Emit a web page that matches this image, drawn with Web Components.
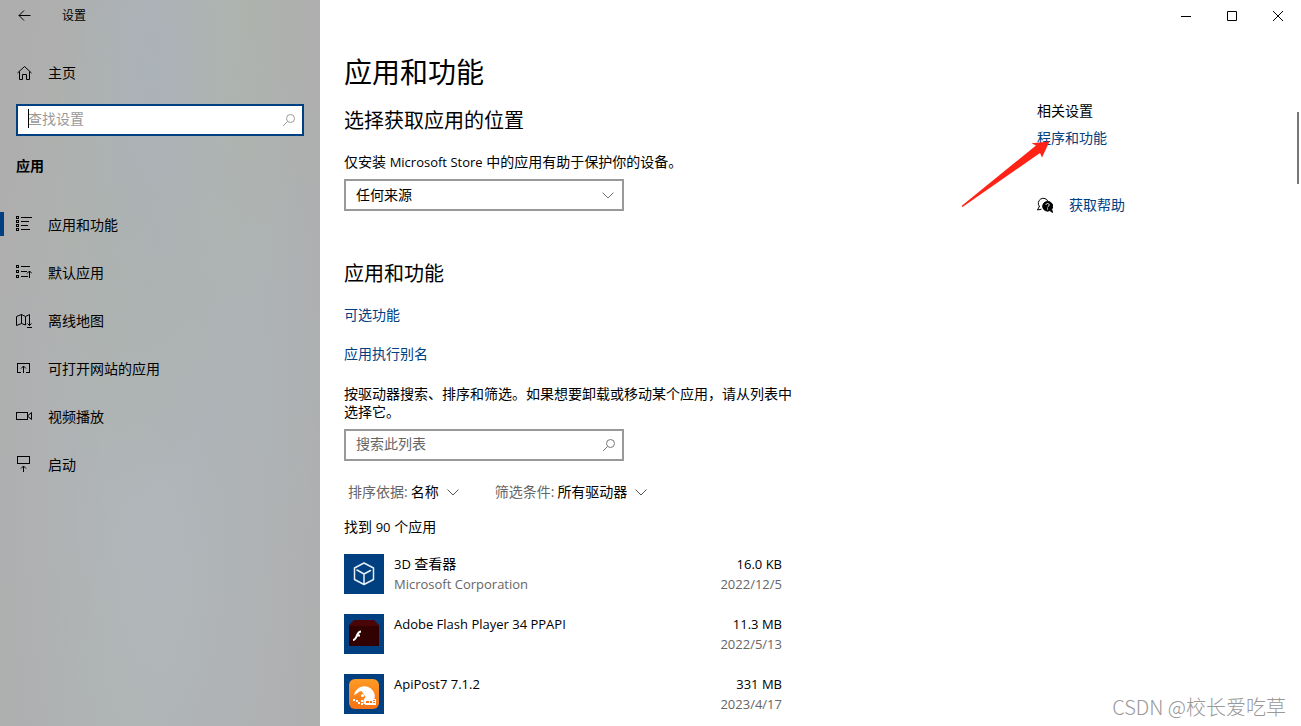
<!DOCTYPE html>
<html lang="zh-CN">
<head>
<meta charset="utf-8">
<title>设置</title>
<style>
  html { --accent: #004080; }
  body { margin: 0; background: #fff; color: #000; font: 14px/18px "Open Sans", "Noto Sans CJK SC", sans-serif; }
</style>
</head>
<body>
<settings-window></settings-window>

<script>
const ICONS = {
  back: [16, 16, '<path d="M14.500 7.500H3M8 2.500L3 7.500l5 5"/>'],
  home: [16, 16, '<path d="M1.500 8L8.500 1.500 15.500 8M3.500 6.500v8h3v-5h4v5h3v-8"/>'],
  search: [14, 14, '<circle cx="8.500" cy="5.500" r="4"/><path d="M5.500 8.500L1 13"/>'],
  chevron: [12, 8, '<path d="M.5 1.500L6 7l5.500-5.500"/>'],
  apps: [16, 16, '<g shape-rendering="crispEdges"><path d="M.5.5h2v2h-2zM.5 4.500h2v2h-2zM.5 8.500h2v2h-2zM.5 12.500h2v2h-2zM5 1.500h11M5 5.500h8M5 9.500h7M5 13.500h9"/></g>'],
  defaults: [16, 16, '<g shape-rendering="crispEdges"><path d="M.5 1.500h2v2h-2zM.5 6.500h2v2h-2zM.5 11.500h2v2h-2zM5 2.500h9M5 7.500h6M5 12.500h7M13.500 7v7"/></g><path d="M11 9.500L13.500 7l2.500 2.500"/>'],
  map: [16, 16, '<path d="M10 12.500l-.5.500-4-1.500-5 2v-9l5-2 4 2 4-2V8M5.500 2.500v9M9.500 4.500V13M13.500 8v6M11.500 11.500l2 2 2-2M11 15.500h5"/>'],
  site: [16, 16, '<path shape-rendering="crispEdges" d="M5 12.500H1.500v-9h12v9H10M7.500 6v7"/><path d="M5 8.500L7.500 6 10 8.500"/>'],
  video: [16, 16, '<path shape-rendering="crispEdges" d="M.5 4.500h11v7H.5z"/><path d="M12 7.500l3.500-3v7L12 8.500"/>'],
  startup: [16, 18, '<path shape-rendering="crispEdges" d="M1.500 1.500h12v7h-12zM7.500 11v6"/><path d="M5 13.500L7.500 11l2.500 2.500"/>'],
  minimize: [10, 10, '<path d="M0 5.500h10"/>'],
  maximize: [10, 10, '<path d="M.5.5h9v9h-9z"/>'],
  close: [10, 10, '<path d="M0 0l10 10M10 0L0 10"/>'],
  help: [16, 16, '<path d="M2.500 9.500A5 5 0 1 1 11 4.500M2.500 9l-2 4 4-.8"/><path fill="currentColor" d="M10.500 4.500a4.800 4.800 0 1 0 2.300 9l2.700 2-.8-3.200a4.800 4.800 0 0 0-4.200-7.800z"/><path stroke="#fff" d="M9 8c0-2 3.200-2 3.200 0 0 1.200-1.600 1.200-1.600 2.400m0 1v1.200"/>'],
  cube: [40, 40, '<path fill="#004080" stroke="none" d="M0 0h40v40H0z"/><g stroke="#e8eef6" stroke-width="1.500" stroke-linejoin="round" stroke-linecap="round"><path d="M20 9l9.500 5v11.500L20 30.500l-9.500-5V14zM20 30.500V20l-7-4M20 20l6.500-3.500"/></g>'],
  flash: [40, 40, '<g stroke="none"><path fill="#004080" d="M0 0h40v40H0z"/><path fill="#4a0606" d="M10 6h20l5 5v4H5v-4z"/><path fill="#320202" d="M5 12h30v20H5z"/></g><path stroke="#fff" stroke-width="2" d="M17 17.500c-3 0-3.500 3-4.500 5s-1.500 3.500-3.500 3.500M12 21.500h4"/>'],
  apipost: [40, 40, '<defs><linearGradient id="g" x2="0" y2="1"><stop stop-color="#ff9a24"/><stop offset="1" stop-color="#f47216"/></linearGradient></defs><g stroke="none"><path fill="#004080" d="M0 0h40v40H0z"/><rect x="5" y="5" width="30" height="30" rx="6" fill="url(#g)"/><path fill="#fff" d="M10 21A10.500 10.500 0 0 1 30.500 20c1 4-1 8-4 10h-7v-4l2-3-4-6c-3 0-4 3-7.500 4z"/><circle cx="18.500" cy="21.500" r="1.500" fill="#fff"/><path fill="#fff" d="M21 25h11v6H21zM9 25h2v2H9zM12 26h2v2h-2zM14 28h2v2h-2zM17 26h2v2h-2zM17 29h2v2h-2z"/><path fill="#f47216" d="M22 27h3v2h-3zM26 27h2v2h-2zM29 26h2v1h-2zM29 28h2v1h-2z"/></g>']
};

function define(name, render) {
  customElements.define(name, class extends HTMLElement {
    connectedCallback() {
      if (!this.shadowRoot) this.attachShadow({ mode: 'open' }).innerHTML = render(this);
    }
  });
}

define('ui-icon', el => {
  const [w, h, body] = ICONS[el.getAttribute('name')];
  return `<style>:host{display:block;flex:none;line-height:0}svg{display:block}</style>
  <svg width="${w}" height="${h}" viewBox="0 0 ${w} ${h}" fill="none" stroke="currentColor" aria-hidden="true">${body}</svg>`;
});

define('nav-item', el => `<style>
  :host{display:block}
  a{display:flex;align-items:center;gap:16px;height:48px;padding:0 16px;box-sizing:border-box;color:inherit;text-decoration:none;position:relative}
  a[aria-current]::before{content:"";position:absolute;left:0;top:11px;width:4px;height:24px;background:var(--accent)}
  ui-icon{margin-bottom:2px}
  </style>
  <a href="#" ${el.hasAttribute('current') ? 'aria-current="page"' : ''}><ui-icon name="${el.getAttribute('icon')}"></ui-icon><slot></slot></a>`);

define('search-box', el => `<style>
  :host{display:block}
  .box{display:flex;align-items:center;position:relative;height:32px;box-sizing:border-box;border:2px solid var(--edge,#999);background:#fff;padding:0 6px 0 10px}
  input{flex:1;min-width:0;height:28px;padding:0 0 4px;box-sizing:border-box;border:0;outline:0;background:none;font:inherit;color:#000}
  input::placeholder{color:var(--hint,#666);opacity:1}
  ui-icon{color:var(--glass,#777)}
  .caret{position:absolute;left:10px;top:3px;width:1px;height:19px;background:#000}
  </style>
  <div class="box"><input type="text" aria-label="${el.getAttribute('hint')}" placeholder="${el.getAttribute('hint')}">
  <ui-icon name="search"></ui-icon>${el.hasAttribute('active') ? '<span class="caret"></span>' : ''}</div>`);

define('settings-sidebar', () => `<style>
  :host{display:block;background:
    radial-gradient(ellipse at 150px 70px,#abb2b8 0,#abb2b800 90px),
    radial-gradient(ellipse at 220px 20px,#aeb4ae 0,#aeb4ae00 110px),
    radial-gradient(ellipse at 130px 190px,#adb2ab 0,#adb2ab00 110px),
    radial-gradient(ellipse at 210px 310px,#adb3b6 0,#adb3b600 150px),
    radial-gradient(ellipse at 160px 520px,#b1b7bb 0,#b1b7bb00 180px),
    radial-gradient(ellipse at 120px 720px,#adb1ab 0,#adb1ab00 90px),#aeaeae}
  header{display:flex;align-items:center;gap:30px;height:32px;padding:0 16px;font-size:12px}
  button{border:0;background:none;padding:0;color:inherit}
  .home{display:flex;align-items:center;gap:16px;height:48px;margin-top:17px;padding:0 16px;color:inherit;text-decoration:none}
  search-box{margin:7px 16px 0;--edge:var(--accent);--hint:#999;--glass:#999}
  h2{margin:21px 16px 0;font-size:14px;line-height:18px;font-weight:700}
  nav{margin-top:26px}
  </style>
  <header><button aria-label="返回"><ui-icon name="back"></ui-icon></button><span>设置</span></header>
  <a class="home" href="#"><ui-icon name="home"></ui-icon>主页</a>
  <search-box hint="查找设置" active></search-box>
  <h2>应用</h2>
  <nav>
    <nav-item icon="apps" current>应用和功能</nav-item>
    <nav-item icon="defaults">默认应用</nav-item>
    <nav-item icon="map">离线地图</nav-item>
    <nav-item icon="site">可打开网站的应用</nav-item>
    <nav-item icon="video">视频播放</nav-item>
    <nav-item icon="startup">启动</nav-item>
  </nav>`);

define('window-controls', () => `<style>
  :host{display:flex;justify-content:flex-end;height:32px}
  button{display:grid;place-items:center;width:46px;padding:0;border:0;background:none;color:#000}
  </style>
  <button aria-label="最小化"><ui-icon name="minimize"></ui-icon></button>
  <button aria-label="最大化"><ui-icon name="maximize"></ui-icon></button>
  <button aria-label="关闭"><ui-icon name="close"></ui-icon></button>`);

define('drop-down', el => `<style>
  :host{display:block}
  .field{display:flex;align-items:center;position:relative}
  select{appearance:none;border:0;background:none;outline:0;margin:0;padding:0 22px 0 0;font:inherit;color:#000}
  ui-icon{position:absolute;right:2px;pointer-events:none;color:#555}
  label{color:#666;margin-right:3px}
  .boxed select{width:100%;height:32px;border:2px solid #999;padding:0 30px 0 10px}
  .boxed ui-icon{right:10px;color:#777}
  </style>
  <div class="field ${el.hasAttribute('boxed') ? 'boxed' : ''}">
  ${el.hasAttribute('label') ? `<label for="s">${el.getAttribute('label')}</label>` : ''}
  <select id="s" ${el.hasAttribute('label') ? '' : 'aria-label="应用来源"'}><option>${el.getAttribute('value')}</option></select>
  <ui-icon name="chevron"></ui-icon></div>`);

define('app-row', el => `<style>
  :host{display:grid;grid-template-columns:40px 1fr auto;column-gap:10px;height:40px;line-height:20px;font-size:13px}
  .size{text-align:right}
  .sub{color:#666}
  </style>
  <ui-icon name="${el.getAttribute('icon')}"></ui-icon>
  <div><div><slot></slot></div><div class="sub">${el.getAttribute('publisher') || ''}</div></div>
  <div class="size"><div>${el.getAttribute('size')}</div><div class="sub">${el.getAttribute('date')}</div></div>`);

define('apps-page', () => `<style>
  :host{display:block;max-width:450px}
  h1{margin:0;font-size:28px;line-height:40px;font-weight:400}
  h2{margin:15px 0 0;font-size:20px;line-height:28px;font-weight:400}
  p{margin:18px 0 8px}
  .latin{font-size:13px}
  drop-down[boxed],search-box{max-width:280px}
  h2.list{margin-top:49px}
  .link{display:block;width:fit-content;margin-top:18px;color:var(--accent);text-decoration:none}
  .link + .link{margin-top:21px}
  .link + p{margin-top:22px}
  .filters{display:flex;gap:34px;margin:22px 4px 0}
  .count{margin:17px 0 18px}
  ul{list-style:none;margin:0 12px 0 0;padding:0;display:grid;gap:20px}
  .cjk{font-size:14px}
  </style>
  <h1>应用和功能</h1>
  <h2>选择获取应用的位置</h2>
  <p>仅安装 <span class="latin">Microsoft Store</span> 中的应用有助于保护你的设备。</p>
  <drop-down boxed value="任何来源"></drop-down>
  <h2 class="list">应用和功能</h2>
  <a class="link" href="#">可选功能</a>
  <a class="link" href="#">应用执行别名</a>
  <p>按驱动器搜索、排序和筛选。如果想要卸载或移动某个应用，请从列表中选择它。</p>
  <search-box hint="搜索此列表"></search-box>
  <div class="filters"><drop-down label="排序依据:" value="名称"></drop-down><drop-down label="筛选条件:" value="所有驱动器"></drop-down></div>
  <div class="count">找到 <span class="latin">90</span> 个应用</div>
  <ul>
    <li><app-row icon="cube" publisher="Microsoft Corporation" size="16.0 KB" date="2022/12/5">3D <span class="cjk">查看器</span></app-row></li>
    <li><app-row icon="flash" size="11.3 MB" date="2022/5/13">Adobe Flash Player 34 PPAPI</app-row></li>
    <li><app-row icon="apipost" size="331 MB" date="2023/4/17">ApiPost7 7.1.2</app-row></li>
  </ul>`);

define('related-links', () => `<style>
  :host{display:block;padding-top:50px}
  h2{margin:0;font-size:14px;line-height:18px;font-weight:400}
  a{color:var(--accent);text-decoration:none}
  .programs{position:relative;width:fit-content;margin-top:9px}
  .arrow{position:absolute;left:-76px;top:12px;pointer-events:none}
  .help{display:flex;align-items:center;gap:16px;margin-top:49px}
  ui-icon{color:#000}
  </style>
  <h2>相关设置</h2>
  <div class="programs"><a href="#">程序和功能</a>
    <svg class="arrow" width="90" height="68" viewBox="0 0 90 68" aria-hidden="true"><path fill="#ff2216" d="M88.500.5L70.500 2.300l4.500 2.200L.5 65l1 1L79 12l2 4.500z"/></svg></div>
  <a class="help" href="#"><ui-icon name="help"></ui-icon>获取帮助</a>`);

define('settings-window', () => `<style>
  :host{display:grid;grid-template-columns:320px 1fr;min-height:100vh;position:relative}
  .content{display:grid;grid-template-columns:1fr 264px;padding:20px 0 0 24px}
  .thumb{position:absolute;right:2px;top:112px;width:2px;height:72px;background:#777}
  .mark{position:absolute;right:15px;bottom:5px;font:20px/28px "Noto Sans CJK SC",sans-serif;font-weight:300;color:#999}
  </style>
  <settings-sidebar></settings-sidebar>
  <main><window-controls></window-controls>
    <div class="content"><apps-page></apps-page><related-links></related-links></div></main>
  <span class="thumb"></span>
  <span class="mark">CSDN @校长爱吃草</span>`);
</script>
</body>
</html>
